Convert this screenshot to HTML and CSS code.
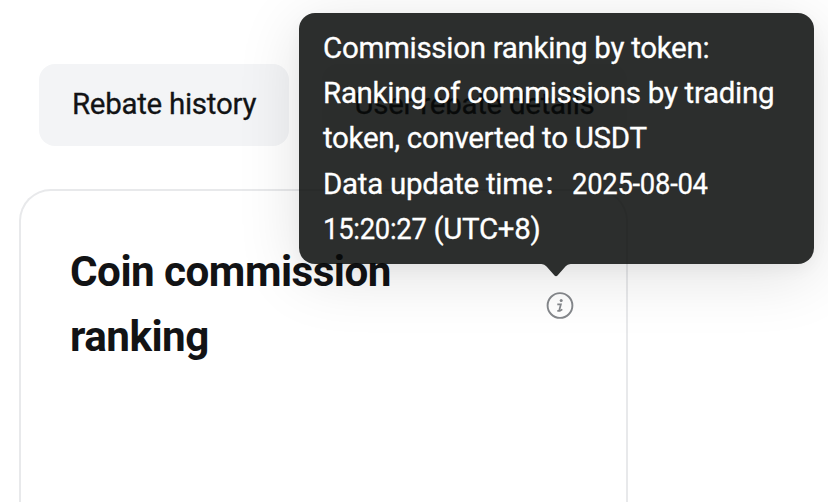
FILE: index.html
```html
<!DOCTYPE html>
<html lang="en">

<head>
    <meta charset="UTF-8">
    <meta name="viewport" content="width=device-width, initial-scale=1.0">
    <title>Rebate</title>
    <link rel="stylesheet" href="styles.css">
</head>

<body>
    <div class="tabs">
        <button class="tab">Rebate history</button>
        <button class="tab tab-user">User rebate details</button>
    </div>
    <div class="card">
        <h2 class="card-title">Coin commission ranking</h2>
        <div class="info">
            <svg class="info-icon" viewBox="0 0 28 28">
                <circle cx="14" cy="14.5" r="12.4" fill="none" stroke="#85888c" stroke-width="1.9" />
                <circle cx="15.2" cy="9.4" r="1.5" fill="#85888c" />
                <path d="M11.3 13.3H14.9L13.4 18.7Q13.1 20.2 14.5 19.6L16.3 18.4M11.3 19.9H14" fill="none" stroke="#85888c" stroke-width="1.7" />
            </svg>
            <div class="tooltip">
                <div>Commission ranking by token:</div>
                <div>Ranking of commissions by trading token, converted to USDT</div>
                <div>Data update time<span class="colon">：</span><span class="digits date">2025-08-04</span> <span class="digits time">15:20:27</span> (UTC+8)</div>
                <svg class="arrow" viewBox="0 0 32 13">
                    <path d="M0 0H32C28 0 27 1 25 3L17.5 11.5Q16 13 14.5 11.5L7 3C5 1 4 0 0 0Z" />
                </svg>
            </div>
        </div>
    </div>
</body>

</html>
```

FILE: styles.css
```css
body {
    margin: 0;
    height: 502px;
    overflow: hidden;
    background-color: #ffffff;
    color: #121315;
    font-family: Roboto, "Noto Sans CJK SC", sans-serif;
}

.tabs {
    display: flex;
    gap: 33px;
    padding: 64px 0 0 39px;
}

.tab {
    width: 250px;
    height: 82px;
    padding: 0 0 2px;
    border: none;
    border-radius: 16px;
    background-color: #f3f4f6;
    color: #121315;
    font-family: inherit;
    font-size: 29.5px;
    letter-spacing: -0.28px;
    white-space: nowrap;
    -webkit-text-stroke: 0.3px;
}

.tab-user {
    width: 305px;
}

.card {
    display: flex;
    justify-content: space-between;
    box-sizing: border-box;
    width: 609px;
    height: 313px;
    margin: 43px 0 0 19px;
    padding: 48px 52px 0 49px;
    border: 2px solid #e8e9eb;
    border-bottom: none;
    border-radius: 32px 32px 0 0;
}

.card-title {
    width: 340px;
    margin: 0;
    font-size: 42.2px;
    font-weight: 700;
    letter-spacing: -0.52px;
    line-height: 65px;
}

.info {
    position: relative;
    width: 28px;
    height: 28px;
    margin-top: 52px;
}

.info-icon {
    display: block;
    width: 28px;
    height: 28px;
}

.tooltip {
    position: absolute;
    right: -239.5px;
    bottom: 55px;
    box-sizing: border-box;
    width: 515px;
    height: 251px;
    padding: 13px 25px 0 24.5px;
    border-radius: 16px;
    background-color: rgba(7, 9, 8, 0.85);
    box-shadow: 0 12px 64px rgba(0, 0, 0, 0.12), 0 6px 16px rgba(0, 0, 0, 0.04);
    color: #ffffff;
    font-size: 29.5px;
    letter-spacing: -0.3px;
    line-height: 45.2px;
    -webkit-text-stroke: 0.3px;
}

.colon {
    display: inline-block;
    width: 29px;
    font-size: 26px;
    line-height: 1;
}

.digits {
    display: inline-block;
    transform: scaleX(0.93);
    transform-origin: left;
}

.time {
    margin-right: -8px;
}

.arrow {
    position: absolute;
    top: 100%;
    left: 241px;
    width: 32px;
    height: 13px;
    fill: #2c2e2d;
}
```
